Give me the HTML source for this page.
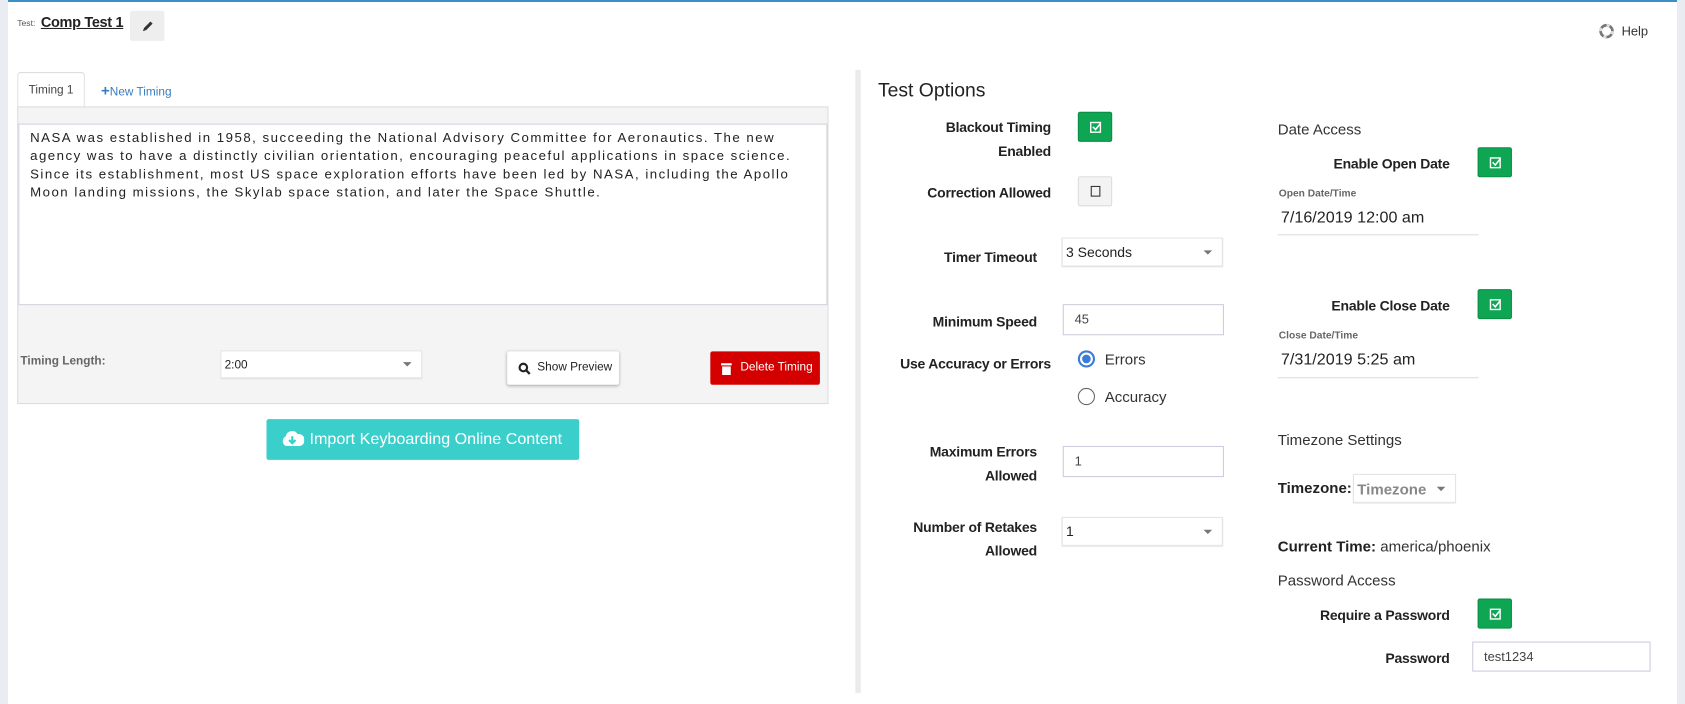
<!DOCTYPE html>
<html><head><style>
*{box-sizing:border-box;margin:0;padding:0}
body{width:1685px;height:704px;position:relative;background:#fff;font-family:"Liberation Sans",sans-serif;color:#333;overflow:hidden}
#w{position:absolute;left:0;top:0;width:1568px;height:655px;transform:scale(1.0746);transform-origin:0 0}
.a{position:absolute}
.lbl{position:absolute;font-weight:bold;font-size:13px;color:#222;text-align:right;line-height:22px;letter-spacing:-0.2px}
.gbtn{position:absolute;width:32px;height:28px;background:#0ea653;border-radius:2px;border:1px solid #0b8d45}
.gbtn svg{position:absolute;left:10px;top:8px}
.inp{position:absolute;border:1px solid #ccd;background:#fff;font-size:13px;padding-left:10px;color:#444}
.sel{position:absolute;border:1px solid #e4e4e4;box-shadow:0 1px 1px #ddd;background:#fff;font-size:13px;padding-left:3px;color:#222}
.caret{position:absolute;right:9px;top:50%;margin-top:-2px;border-left:4px solid transparent;border-right:4px solid transparent;border-top:4px solid #777}
</style></head><body>
<div class="a" style="left:0;top:0;width:8px;height:704px;background:#e9edf2"></div>
<div class="a" style="left:1677px;top:0;width:8px;height:704px;background:#e9edf2"></div>
<div class="a" style="left:8px;top:0;width:1669px;height:2px;background:#3a8fc7"></div>
<div id="w">
<div class="a" style="left:16px;top:17px;font-size:8px;color:#555">Test:</div>
<div class="a" style="left:38px;top:13px;font-size:13.5px;font-weight:bold;color:#222;text-decoration:underline;letter-spacing:-0.3px">Comp Test 1</div>
<div class="a" style="left:121px;top:10px;width:32px;height:28px;background:#eee;border-radius:2px">
<svg width="32" height="28"><path d="M12 19 L13 16 L19 10 L21 12 L15 18 Z" fill="#333"/></svg></div>

<svg class="a" style="left:1488px;top:22px" width="14" height="14" viewBox="0 0 14 14"><circle cx="7" cy="7" r="5.5" fill="none" stroke="#777" stroke-width="2.5"/><circle cx="7" cy="7" r="5.5" fill="none" stroke="#ddd" stroke-width="2.5" stroke-dasharray="3 5.6"/></svg>
<div class="a" style="left:1509px;top:22px;font-size:12px;color:#333">Help</div>

<div class="a" style="left:16px;top:67px;width:63px;height:33px;border:1px solid #ddd;border-bottom:none;border-radius:3px 3px 0 0;background:#fff;font-size:11px;color:#444;text-align:center;line-height:33px">Timing 1</div>
<div class="a" style="left:94px;top:76px;font-size:11px;color:#3a7cc0"><b style="font-size:14px">+</b>New Timing</div>
<div class="a" style="left:16px;top:99px;width:755px;height:277px;background:#f4f4f4;border:1px solid #ddd"></div>
<div class="a" style="left:17px;top:115px;width:753px;height:169px;background:#fff;border:1px solid #d0d4da"></div>
<div class="a" style="left:28px;top:120px;width:740px;font-size:12.3px;line-height:17px;letter-spacing:1.4px;color:#222;white-space:nowrap">NASA was established in 1958, succeeding the National Advisory Committee for Aeronautics. The new<br>agency was to have a distinctly civilian orientation, encouraging peaceful applications in space science.<br>Since its establishment, most US space exploration efforts have been led by NASA, including the Apollo<br>Moon landing missions, the Skylab space station, and later the Space Shuttle.</div>
<div class="a" style="left:19px;top:330px;font-size:11px;font-weight:bold;color:#666">Timing Length:</div>
<div class="sel" style="left:205px;top:326px;width:188px;height:26px;line-height:26px;font-size:11px">2:00<span class="caret"></span></div>
<div class="a" style="left:472px;top:327px;width:104px;height:31px;background:#fff;box-shadow:0 1px 3px #aaa;border-radius:2px;font-size:11px;color:#222;line-height:31px;padding-left:28px">
<svg class="a" style="left:10px;top:10px" width="12" height="12"><circle cx="5" cy="5" r="3.5" fill="none" stroke="#222" stroke-width="2"/><path d="M7.5 7.5 L11 11" stroke="#222" stroke-width="2.2"/></svg>Show Preview</div>
<div class="a" style="left:661px;top:327px;width:102px;height:31px;background:#d40000;border-radius:2px;font-size:11px;color:#fff;line-height:31px;padding-left:28px">
<svg class="a" style="left:10px;top:10px" width="10" height="12"><rect x="0" y="1" width="10" height="2" fill="#fff"/><rect x="1" y="4" width="8" height="8" fill="#fff"/></svg>Delete Timing</div>
<div class="a" style="left:248px;top:390px;width:291px;height:38px;background:#3bcfcc;border-radius:2px;color:#fff;font-size:15px;line-height:38px;padding-left:40px">
<svg class="a" style="left:13px;top:9px" width="22" height="18"><path d="M5 16 A5 5 0 0 1 5 7 A6 6 0 0 1 16 5 A5 5 0 0 1 18 16 Z" fill="#fff"/><path d="M11 7 V13 M8 10.5 L11 13.5 L14 10.5" stroke="#3bcfcc" stroke-width="2" fill="none"/></svg>Import Keyboarding Online Content</div>

<div class="a" style="left:796px;top:65px;width:5px;height:580px;background:#ebebeb"></div>

<div class="a" style="left:817px;top:74px;font-size:18px;color:#222">Test Options</div>
<div class="lbl" style="left:820px;top:108px;width:158px">Blackout Timing<br>Enabled</div>
<div class="gbtn" style="left:1003px;top:104px"><svg width="12" height="12"><rect x="1" y="1" width="9" height="9" fill="none" stroke="#fff" stroke-width="1.3"/><path d="M3 5 L5.5 7.5 L10 2" stroke="#fff" stroke-width="1.5" fill="none"/></svg></div>
<div class="lbl" style="left:820px;top:169px;width:158px">Correction Allowed</div>
<div class="a" style="left:1003px;top:164px;width:32px;height:28px;background:#f3f3f3;border:1px solid #ddd;border-radius:2px"><div class="a" style="left:11px;top:8px;width:9px;height:10px;border:1.3px solid #333"></div></div>
<div class="lbl" style="left:820px;top:229px;width:145px">Timer Timeout</div>
<div class="sel" style="left:988px;top:221px;width:150px;height:27px;line-height:26px">3 Seconds<span class="caret"></span></div>
<div class="lbl" style="left:820px;top:289px;width:145px">Minimum Speed</div>
<div class="inp" style="left:989px;top:283px;width:150px;height:29px;line-height:27px;font-size:12px">45</div>
<div class="lbl" style="left:820px;top:328px;width:158px">Use Accuracy or Errors</div>
<div class="a" style="left:1003px;top:326px;width:16px;height:16px;border:2px solid #3a7cd8;border-radius:50%"><div class="a" style="left:2px;top:2px;width:8px;height:8px;background:#3a7cd8;border-radius:50%"></div></div>
<div class="a" style="left:1028px;top:326px;font-size:14px;color:#333">Errors</div>
<div class="a" style="left:1003px;top:361px;width:16px;height:16px;border:1.5px solid #666;border-radius:50%"></div>
<div class="a" style="left:1028px;top:361px;font-size:14px;color:#333">Accuracy</div>
<div class="lbl" style="left:820px;top:410px;width:145px">Maximum Errors<br>Allowed</div>
<div class="inp" style="left:989px;top:415px;width:150px;height:29px;line-height:27px;font-size:12px">1</div>
<div class="lbl" style="left:820px;top:480px;width:145px">Number of Retakes<br>Allowed</div>
<div class="sel" style="left:988px;top:481px;width:150px;height:27px;line-height:26px">1<span class="caret"></span></div>

<div class="a" style="left:1189px;top:112px;font-size:14px;color:#333">Date Access</div>
<div class="lbl" style="left:1180px;top:142px;width:169px">Enable Open Date</div>
<div class="gbtn" style="left:1375px;top:137px"><svg width="12" height="12"><rect x="1" y="1" width="9" height="9" fill="none" stroke="#fff" stroke-width="1.3"/><path d="M3 5 L5.5 7.5 L10 2" stroke="#fff" stroke-width="1.5" fill="none"/></svg></div>
<div class="a" style="left:1190px;top:175px;font-size:9.5px;font-weight:bold;color:#666">Open Date/Time</div>
<div class="a" style="left:1189px;top:194px;width:187px;height:25px;border-bottom:1px solid #ddd;font-size:15px;color:#222;padding-left:3px">7/16/2019 12:00 am</div>
<div class="lbl" style="left:1180px;top:274px;width:169px">Enable Close Date</div>
<div class="gbtn" style="left:1375px;top:269px"><svg width="12" height="12"><rect x="1" y="1" width="9" height="9" fill="none" stroke="#fff" stroke-width="1.3"/><path d="M3 5 L5.5 7.5 L10 2" stroke="#fff" stroke-width="1.5" fill="none"/></svg></div>
<div class="a" style="left:1190px;top:307px;font-size:9.5px;font-weight:bold;color:#666">Close Date/Time</div>
<div class="a" style="left:1189px;top:326px;width:187px;height:26px;border-bottom:1px solid #ddd;font-size:15px;color:#222;padding-left:3px">7/31/2019 5:25 am</div>
<div class="a" style="left:1189px;top:401px;font-size:14px;color:#333">Timezone Settings</div>
<div class="a" style="left:1189px;top:446px;font-size:14px;font-weight:bold;color:#222">Timezone:</div>
<div class="sel" style="left:1259px;top:441px;width:96px;height:27px;line-height:26px;font-size:14px;font-weight:bold;color:#888">Timezone<span class="caret"></span></div>
<div class="a" style="left:1189px;top:500px;font-size:14px;color:#333"><b style="color:#222">Current Time:</b> america/phoenix</div>
<div class="a" style="left:1189px;top:532px;font-size:14px;color:#333">Password Access</div>
<div class="lbl" style="left:1180px;top:562px;width:169px">Require a Password</div>
<div class="gbtn" style="left:1375px;top:557px"><svg width="12" height="12"><rect x="1" y="1" width="9" height="9" fill="none" stroke="#fff" stroke-width="1.3"/><path d="M3 5 L5.5 7.5 L10 2" stroke="#fff" stroke-width="1.5" fill="none"/></svg></div>
<div class="lbl" style="left:1180px;top:602px;width:169px">Password</div>
<div class="inp" style="left:1370px;top:597px;width:166px;height:28px;line-height:26px;font-size:12px">test1234</div>
</div>
</body></html>
